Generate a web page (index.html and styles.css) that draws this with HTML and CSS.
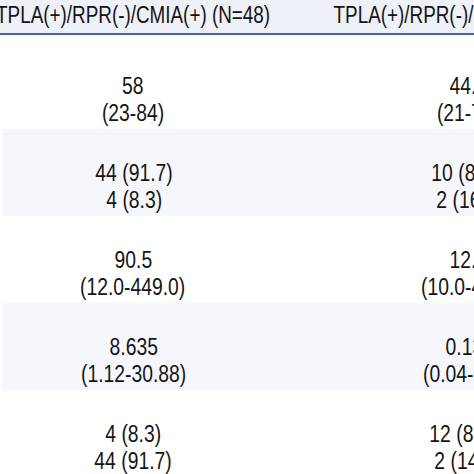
FILE: index.html
```html
<!DOCTYPE html>
<html>
<head>
<meta charset="utf-8">
<link rel="stylesheet" href="styles.css">
</head>
<body>
<div class="table">
  <div class="row head">
    <div class="cell"><span>TPLA(+)/RPR(-)/CMIA(+) (N=48)</span></div>
    <div class="cell"><span>TPLA(+)/RPR(-)/CMIA(-) (N=14)</span></div>
  </div>
  <div class="row first">
    <div class="cell"><span>&nbsp;</span><span>58</span><span>(23-84)</span></div>
    <div class="cell"><span>&nbsp;</span><span>44.5</span><span>(21-75)</span></div>
  </div>
  <div class="row alt">
    <div class="cell"><span>&nbsp;</span><span>44 (91.7)</span><span>4 (8.3)</span></div>
    <div class="cell"><span>&nbsp;</span><span>10 (83.3)</span><span>2 (16.7)</span></div>
  </div>
  <div class="row">
    <div class="cell"><span>&nbsp;</span><span>90.5</span><span>(12.0-449.0)</span></div>
    <div class="cell"><span>&nbsp;</span><span>12.0</span><span>(10.0-45.0)</span></div>
  </div>
  <div class="row alt">
    <div class="cell"><span>&nbsp;</span><span>8.635</span><span>(1.12-30.88)</span></div>
    <div class="cell"><span>&nbsp;</span><span>0.135</span><span>(0.04-0.48)</span></div>
  </div>
  <div class="row">
    <div class="cell"><span>&nbsp;</span><span>4 (8.3)</span><span>44 (91.7)</span></div>
    <div class="cell"><span>&nbsp;</span><span>12 (85.7)</span><span>2 (14.3)</span></div>
  </div>
</div>
</body>
</html>
```
FILE: styles.css
```css
html, body {
  margin: 0;
  padding: 0;
  background: #ffffff;
  overflow: hidden;
}
.table {
  width: 640px;
  font-family: "Liberation Sans", Arial, sans-serif;
  font-size: 23px;
  color: #141414;
}
.row {
  display: grid;
  grid-template-columns: 266px 268px;
  column-gap: 68px;
  padding: 4px 0 2px;
}
.row.head {
  height: 33px;
  padding: 0;
  background: #eef1f8;
  border-bottom: 2px solid #4a64a0;
}
.row.head .cell {
  line-height: 31px;
}
.row.first {
  padding-top: 11px;
}
.row.alt {
  background: #f6f7fc;
  margin: 0 2px;
}
.row.alt .cell:first-child {
  margin-left: -2px;
}
.cell {
  display: flex;
  flex-direction: column;
  align-items: center;
  line-height: 27px;
  white-space: nowrap;
}
.cell span {
  display: inline-block;
  transform: scaleX(0.84);
}
.row.head .cell span {
  transform: scaleX(0.82);
}
```
